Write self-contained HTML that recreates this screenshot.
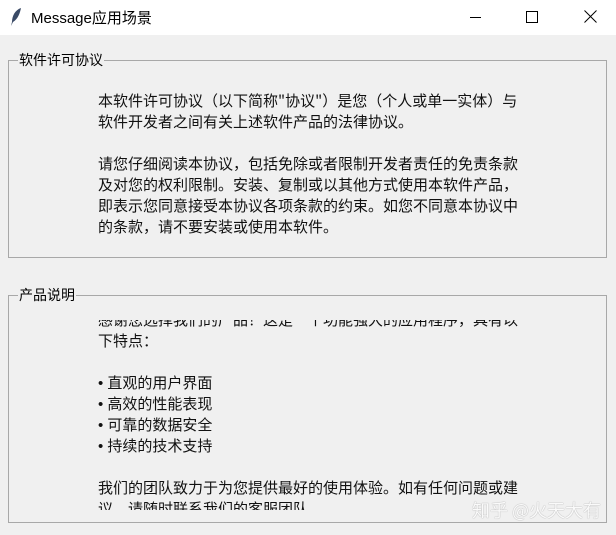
<!DOCTYPE html>
<html><head><meta charset="utf-8"><style>
body{margin:0;width:616px;height:535px;background:#f0f0f0;position:relative;overflow:hidden;font-family:"Liberation Sans","Microsoft YaHei","Noto Sans CJK SC",sans-serif;color:#1a1a1a}
.tb{position:absolute;left:0;top:0;width:616px;height:35px;background:#fff}
.title{position:absolute;left:31px;top:7px;font-size:15px;color:#000}
.fr{position:absolute;left:8px;width:597px;border:1px solid #a8a8a8}
.lb{position:absolute;left:18px;background:#f0f0f0;font-size:14px;padding:0 1px;line-height:16px;color:#000}
.tx{position:absolute;left:98px;font-size:15px;line-height:21px;white-space:pre;color:#111;font-family:"Microsoft YaHei","Noto Sans CJK SC",sans-serif}
.b{font-family:"Liberation Sans",sans-serif;line-height:0}
.clip{position:absolute;left:90px;top:320px;width:450px;height:190px;overflow:hidden}
</style></head><body>
<div class="tb">
<svg style="position:absolute;left:9px;top:7px" width="14" height="20" viewBox="0 0 14 20"><path d="M12 1 C6 3 3 9 3 15 L2 19 L4 15 C9 12 11 6 12 1Z" fill="#3a4a66"/></svg>
<div class="title">Message应用场景</div>
<div style="position:absolute;left:470px;top:17px;width:11px;height:1px;background:#000"></div>
<div style="position:absolute;left:526px;top:11px;width:10px;height:10px;border:1px solid #000"></div>
<svg style="position:absolute;left:584px;top:10px" width="13" height="13"><path d="M0.5 0.5L12.5 12.5M12.5 0.5L0.5 12.5" stroke="#000" stroke-width="1"/></svg>
</div>
<div class="fr" style="top:60px;height:196px"></div>
<div class="lb" style="top:52px">软件许可协议</div>
<div class="tx" style="top:90px">本软件许可协议（以下简称"协议"）是您（个人或单一实体）与
软件开发者之间有关上述软件产品的法律协议。

请您仔细阅读本协议，包括免除或者限制开发者责任的免责条款
及对您的权利限制。安装、复制或以其他方式使用本软件产品，
即表示您同意接受本协议各项条款的约束。如您不同意本协议中
的条款，请不要安装或使用本软件。</div>
<div class="fr" style="top:295px;height:226px"></div>
<div class="lb" style="top:287px">产品说明</div>
<div class="clip"><div class="tx" style="left:8px;top:-11px">感谢您选择我们的产品！这是一个功能强大的应用程序，具有以
下特点：

<span class="b">• </span>直观的用户界面
<span class="b">• </span>高效的性能表现
<span class="b">• </span>可靠的数据安全
<span class="b">• </span>持续的技术支持

我们的团队致力于为您提供最好的使用体验。如有任何问题或建
议，请随时联系我们的客服团队。</div></div>
<div style="position:absolute;left:472px;top:497px;font-size:18px;color:#fafafa;font-family:'Noto Sans CJK SC',sans-serif;text-shadow:0 0 1px #888">知乎 @火天大有</div>
</body></html>
